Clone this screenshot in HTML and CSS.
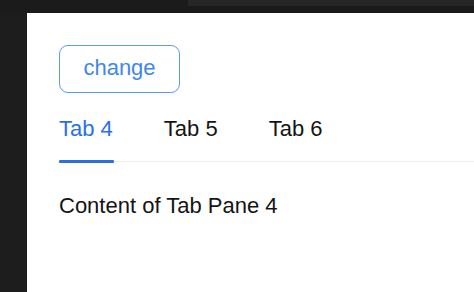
FILE: index.html
```html
<!DOCTYPE html>
<html>
<head>
<meta charset="utf-8">
<link rel="stylesheet" href="styles.css">
</head>
<body>
<div class="topbar"><div class="topbar-left"></div><div class="topbar-right"></div></div>
<div class="main">
  <div class="gutter"></div>
  <div class="panel">
    <button class="btn">change</button>
    <div class="tabs-nav">
      <div class="tab active">Tab 4</div>
      <div class="tab">Tab 5</div>
      <div class="tab">Tab 6</div>
    </div>
    <div class="pane">Content of Tab Pane 4</div>
  </div>
</div>
</body>
</html>
```

FILE: styles.css
```css
html, body {
  margin: 0;
  padding: 0;
  background: #1b1b1b;
  height: 100%;
  overflow: hidden;
}
body {
  font-family: "Liberation Sans", Arial, sans-serif;
  display: flex;
  flex-direction: column;
}
.topbar {
  height: 13px;
  display: flex;
  background: #1b1b1b;
}
.topbar-left {
  width: 188px;
}
.topbar-right {
  flex: 1;
  height: 6px;
  background: #262626;
}
.main {
  flex: 1;
  display: flex;
}
.gutter {
  width: 27px;
  background: #1d1d1d;
}
.panel {
  flex: 1;
  background: #ffffff;
  padding: 32px 0 0 32px;
}
.btn {
  display: block;
  box-sizing: border-box;
  width: 121px;
  height: 48px;
  border: 1.5px solid #5d9bf0;
  border-radius: 9px;
  background: #fff;
  color: #3f87ea;
  font-family: "Liberation Sans", Arial, sans-serif;
  font-size: 22px;
  padding: 0 0 2px;
  margin: 0;
}
.tabs-nav {
  display: flex;
  gap: 51px;
  border-bottom: 1px solid #eeeeee;
  height: 69px;
  box-sizing: border-box;
}
.tab {
  font-size: 22px;
  line-height: 33px;
  padding: 19px 0 16px;
  color: #141414;
  position: relative;
}
.tab.active {
  color: #2a6fe8;
}
.tab.active::after {
  content: "";
  position: absolute;
  left: 0;
  right: -1px;
  bottom: -2px;
  height: 3px;
  background: #2a6fe8;
  border-radius: 1px;
}
.pane {
  margin-top: 27px;
  font-size: 22px;
  line-height: 33px;
  color: #141414;
}
```
